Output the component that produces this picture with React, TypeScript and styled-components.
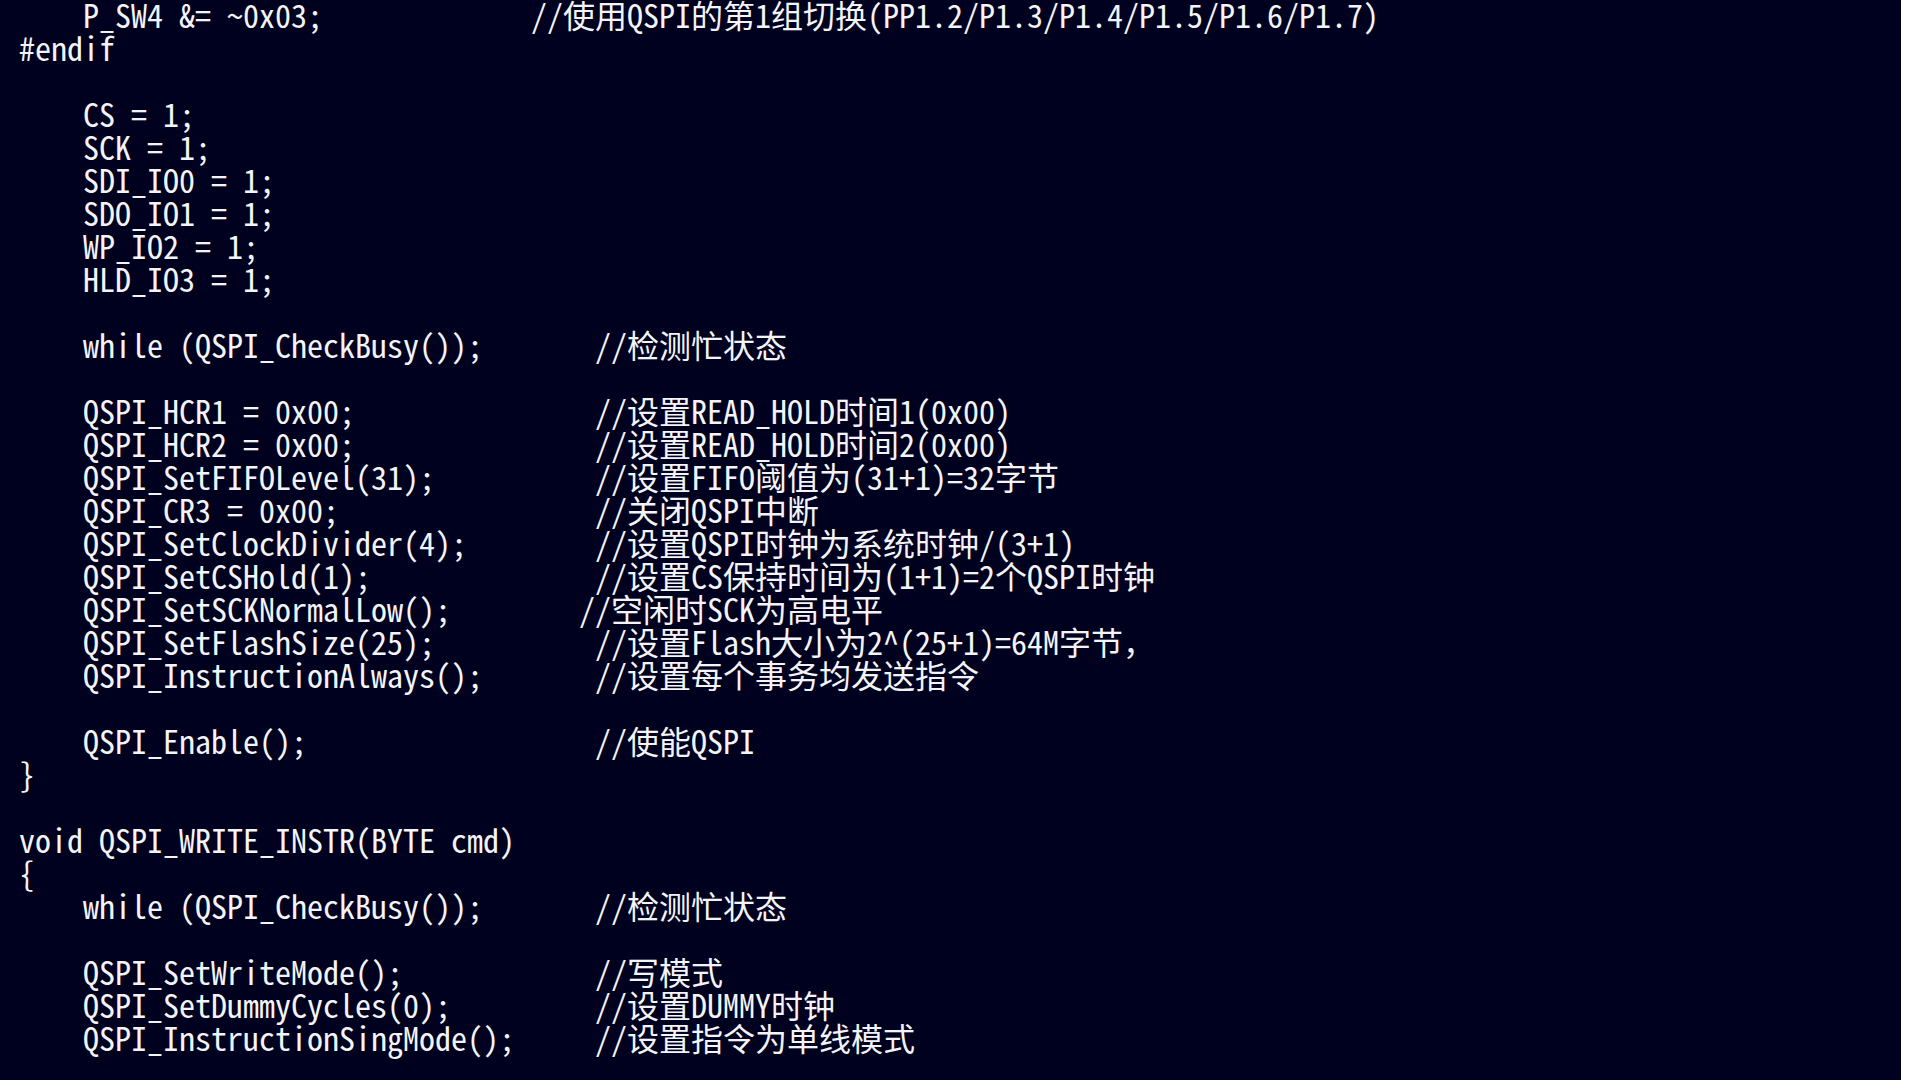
import React from "react";
import styled, { createGlobalStyle } from "styled-components";

const GlobalStyle = createGlobalStyle`
  html, body {
    margin: 0;
    padding: 0;
    width: 100%;
    height: 100%;
    overflow: hidden;
    background: #00001f;
  }
  #root {
    height: 100%;
  }
`;

const Screen = styled.div`
  display: flex;
  width: 1920px;
  height: 1080px;
  overflow: hidden;
`;

const Editor = styled.div`
  flex: 1;
  background: #00001f;
  color: #f4f4f8;
  font-family: "Noto Sans Mono CJK SC", "Noto Sans CJK SC", "Liberation Mono", monospace;
  font-size: 32px;
  line-height: 33px;
  padding: 0 0 0 19px;
  overflow: hidden;
`;

const Lines = styled.div`
  margin-top: -2px;
`;

const Strip = styled.div`
  width: 19px;
  background: #ffffff;
`;

const Line = styled.div`
  display: flex;
  height: 33px;
  white-space: pre;
`;

const Code = styled.span<{ $col?: number }>`
  flex: none;
  white-space: pre;
  width: ${(p) => (p.$col ? `${p.$col * 16}px` : "auto")};
`;

const Comment = styled.span`
  white-space: pre;
`;

type Row = { code: string; comment?: string; col?: number };

const rows: Row[] = [
  { code: "    P_SW4 &= ~0x03;", comment: "//使用QSPI的第1组切换(PP1.2/P1.3/P1.4/P1.5/P1.6/P1.7)", col: 32 },
  { code: "#endif" },
  { code: "" },
  { code: "    CS = 1;" },
  { code: "    SCK = 1;" },
  { code: "    SDI_IO0 = 1;" },
  { code: "    SDO_IO1 = 1;" },
  { code: "    WP_IO2 = 1;" },
  { code: "    HLD_IO3 = 1;" },
  { code: "" },
  { code: "    while (QSPI_CheckBusy());", comment: "//检测忙状态", col: 36 },
  { code: "" },
  { code: "    QSPI_HCR1 = 0x00;", comment: "//设置READ_HOLD时间1(0x00)", col: 36 },
  { code: "    QSPI_HCR2 = 0x00;", comment: "//设置READ_HOLD时间2(0x00)", col: 36 },
  { code: "    QSPI_SetFIFOLevel(31);", comment: "//设置FIFO阈值为(31+1)=32字节", col: 36 },
  { code: "    QSPI_CR3 = 0x00;", comment: "//关闭QSPI中断", col: 36 },
  { code: "    QSPI_SetClockDivider(4);", comment: "//设置QSPI时钟为系统时钟/(3+1)", col: 36 },
  { code: "    QSPI_SetCSHold(1);", comment: "//设置CS保持时间为(1+1)=2个QSPI时钟", col: 36 },
  { code: "    QSPI_SetSCKNormalLow();", comment: "//空闲时SCK为高电平", col: 35 },
  { code: "    QSPI_SetFlashSize(25);", comment: "//设置Flash大小为2^(25+1)=64M字节，", col: 36 },
  { code: "    QSPI_InstructionAlways();", comment: "//设置每个事务均发送指令", col: 36 },
  { code: "" },
  { code: "    QSPI_Enable();", comment: "//使能QSPI", col: 36 },
  { code: "}" },
  { code: "" },
  { code: "void QSPI_WRITE_INSTR(BYTE cmd)" },
  { code: "{" },
  { code: "    while (QSPI_CheckBusy());", comment: "//检测忙状态", col: 36 },
  { code: "" },
  { code: "    QSPI_SetWriteMode();", comment: "//写模式", col: 36 },
  { code: "    QSPI_SetDummyCycles(0);", comment: "//设置DUMMY时钟", col: 36 },
  { code: "    QSPI_InstructionSingMode();", comment: "//设置指令为单线模式", col: 36 },
  { code: "" },
];

export default function App() {
  return (
    <>
      <GlobalStyle />
      <Screen>
        <Editor>
          <Lines>
            {rows.map((r, i) => (
              <Line key={i}>
                <Code $col={r.comment ? r.col : undefined}>{r.code || " "}</Code>
                {r.comment && <Comment>{r.comment}</Comment>}
              </Line>
            ))}
          </Lines>
        </Editor>
        <Strip />
      </Screen>
    </>
  );
}
